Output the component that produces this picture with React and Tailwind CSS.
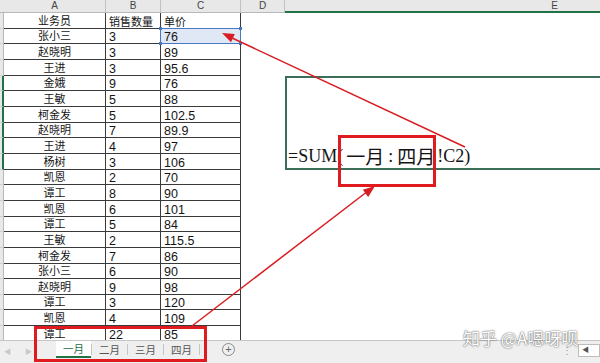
import React from "react";

const rows = [
  ["业务员", "销售数量", "单价"],
  ["张小三", "3", "76"],
  ["赵晓明", "3", "89"],
  ["王进", "3", "95.6"],
  ["金娥", "9", "76"],
  ["王敏", "5", "88"],
  ["柯金发", "5", "102.5"],
  ["赵晓明", "7", "89.9"],
  ["王进", "4", "97"],
  ["杨树", "3", "106"],
  ["凯恩", "2", "70"],
  ["谭工", "8", "90"],
  ["凯恩", "6", "101"],
  ["谭工", "5", "84"],
  ["王敏", "2", "115.5"],
  ["柯金发", "7", "86"],
  ["张小三", "6", "90"],
  ["赵晓明", "9", "98"],
  ["谭工", "3", "120"],
  ["凯恩", "4", "109"],
  ["谭工", "22", "85"],
];

const cjk = "font-['Noto_Sans_CJK_SC',sans-serif]";

const Row = ({ r, i }) => {
  const selected = i === 1;
  return (
    <div className="flex h-[15.67px] shrink-0">
      <div className={`w-[102px] border-r border-b border-[#3a3a3a] flex items-end justify-center pb-[1px] text-[11px] leading-[13px] ${cjk}`}>
        {r[0]}
      </div>
      <div className={`w-[55px] border-r border-b border-[#3a3a3a] flex items-end pl-[3px] leading-[12px] ${i === 0 ? `text-[11px] pb-[1px] ${cjk}` : "text-[12.5px]"}`}>
        {r[1]}
      </div>
      <div className={`relative w-[80px] border-r border-b border-[#3a3a3a] flex items-end pl-[3px] leading-[12px] ${i === 0 ? `text-[11px] pb-[1px] ${cjk}` : "text-[12.5px]"} ${selected ? "bg-[#dfe8f4]" : ""}`}>
        {r[2]}
        {selected && (
          <div className="absolute inset-[-1px] border border-[#4a78c0]">
            <div className="absolute left-[-2px] top-[-2px] w-[3px] h-[3px] bg-[#4a78c0]" />
            <div className="absolute right-[-2px] top-[-2px] w-[3px] h-[3px] bg-[#4a78c0]" />
            <div className="absolute left-[-2px] bottom-[-2px] w-[3px] h-[3px] bg-[#4a78c0]" />
            <div className="absolute right-[-2px] bottom-[-2px] w-[3px] h-[3px] bg-[#4a78c0]" />
          </div>
        )}
      </div>
    </div>
  );
};

const Tab = ({ label, active }) => (
  <div className="h-full flex items-stretch">
    <div
      className={`w-[35px] flex items-center justify-center text-[10.5px] ${cjk} ${
        active ? "bg-white text-[#1e6b3f] border-b-2 border-[#217346]" : "text-[#555]"
      }`}
    >
      {label}
    </div>
    <div className="w-px my-[3px] bg-[#c4c4c4]" />
  </div>
);

export default function App() {
  return (
    <div className="relative w-[600px] h-[363px] overflow-hidden bg-white text-[#141414] font-['Liberation_Sans','Noto_Sans_CJK_SC',sans-serif] flex flex-col">
      {/* column headers */}
      <div className="flex h-[13px] shrink-0 bg-[#e8e8e8] text-[10px] text-[#444] leading-none">
        <div className="w-[4px] border-b border-[#b8b8b8]" />
        <div className="w-[102px] border-r border-b border-[#c2c2c2] border-b-[#b8b8b8] flex items-center justify-center">A</div>
        <div className="w-[55px] border-r border-b border-[#c2c2c2] border-b-[#b8b8b8] flex items-center justify-center">B</div>
        <div className="w-[80px] border-r border-b border-[#c2c2c2] border-b-[#b8b8b8] flex items-center justify-center">C</div>
        <div className="w-[44px] border-r border-b border-[#c2c2c2] border-b-[#b8b8b8] flex items-center justify-center">D</div>
        <div className="flex-1 border-b-2 border-[#217346] flex items-center justify-end pr-[42px]">E</div>
      </div>

      {/* sheet body */}
      <div className="flex h-[327px] shrink-0 overflow-hidden">
        <div className="w-[4px] flex flex-col bg-[#e8e8e8]">
          {rows.map((_, i) => (
            <div
              key={i}
              className={`h-[15.67px] shrink-0 border-b border-[#d0d0d0] ${
                i >= 4 && i <= 9 ? "border-r-2 border-r-[#217346]" : "border-r border-r-[#b8b8b8]"
              }`}
            />
          ))}
        </div>
        <div className="flex flex-col">
          {rows.map((r, i) => (
            <Row key={i} r={r} i={i} />
          ))}
        </div>
        <div className="w-[44px]" />
        <div className="flex-1">
          <div className="mt-[62.7px] h-[94px] border-2 border-r-0 border-[#3b6e57] flex items-end pl-[1px] pb-[1px] leading-[22px]">
            <span className="font-['Liberation_Serif',serif] text-[18px]">=SUM(</span>
            <span className={`${cjk} text-[19px] ml-[3px]`}>一月</span>
            <span className="font-['Liberation_Serif',serif] text-[18px] px-[4px]">:</span>
            <span className={`${cjk} text-[19px]`}>四月</span>
            <span className="font-['Liberation_Serif',serif] text-[18px] ml-[2px]">!C2)</span>
          </div>
        </div>
      </div>

      {/* sheet tabs */}
      <div className="flex-1 flex items-stretch bg-[#efefef] border-t border-[#c6c6c6]">
        <div className="w-[56px] flex items-center gap-[14px] pl-[4px] text-[7px] text-[#c8c8c8]">
          <span>◀</span>
          <span>▶</span>
        </div>
        <div className="flex h-[17px]">
          <Tab label="一月" active />
          <Tab label="二月" />
          <Tab label="三月" />
          <Tab label="四月" />
        </div>
        <div className="ml-[22px] h-[17px] flex items-center">
          <div className="w-[13px] h-[13px] rounded-full border border-[#8a8a8a] flex items-center justify-center text-[11px] leading-none text-[#666]">
            +
          </div>
        </div>
        <div className="flex-1" />
        <div className="h-[19px] flex items-center gap-[6px] text-[#999]">
          <span className="text-[10px]">⋮</span>
          <div className="w-[22px] h-[13px] bg-white border border-[#bdbdbd] flex items-center pl-[3px] text-[7px] text-[#555]">◀</div>
        </div>
      </div>

      {/* watermark */}
      <div className={`absolute left-[463px] top-[325px] text-[17px] text-white ${cjk} [text-shadow:0_0_2px_#6b6b6b,0_0_1px_#6b6b6b] whitespace-nowrap`}>
        知乎 @A嗯呀呗
      </div>

      {/* annotations */}
      <svg className="absolute inset-0 pointer-events-none" width="600" height="363" viewBox="0 0 600 363">
        <line x1="465" y1="147" x2="230" y2="37" stroke="#d81d22" strokeWidth="1.5" />
        <polygon points="222,33 234.8,34 231,42.2" fill="#d81d22" />
        <line x1="192" y1="326" x2="368" y2="191" stroke="#d81d22" strokeWidth="1.5" />
        <polygon points="375,186 368.2,196.9 362.8,189.7" fill="#d81d22" />
        <rect x="339.5" y="136.5" width="95" height="49" fill="none" stroke="#e01b20" strokeWidth="3" />
        <rect x="35.5" y="327.5" width="170" height="33" fill="none" stroke="#e01b20" strokeWidth="3" />
      </svg>
    </div>
  );
}
